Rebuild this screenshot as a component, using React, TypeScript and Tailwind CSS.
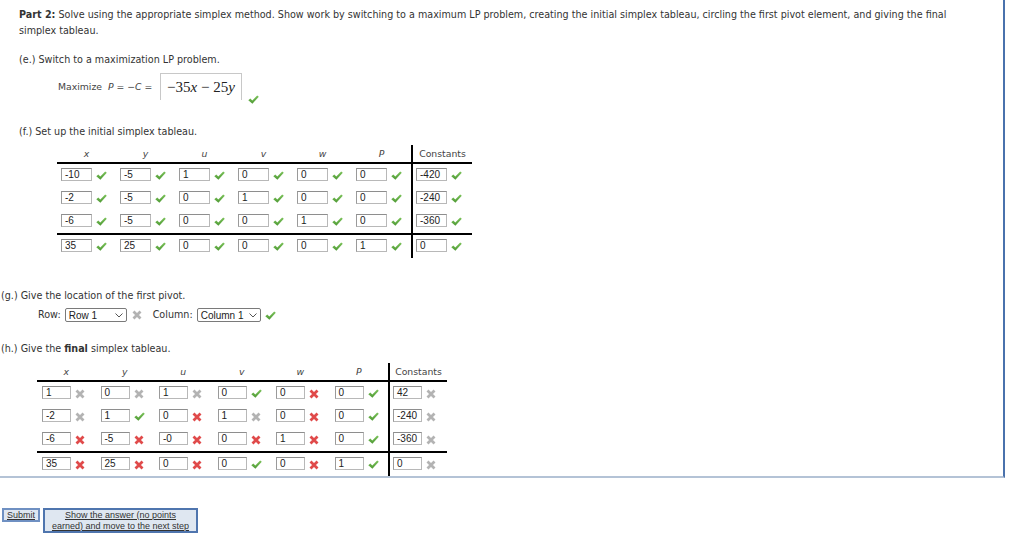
import React from "react"

type Mark = "ok" | "gray" | "red"

const Check = () => (
  <svg width="11" height="9" viewBox="0 0 11 9" className="shrink-0">
    <defs>
      <linearGradient id="gck" x1="0" y1="0" x2="0" y2="1">
        <stop offset="0" stopColor="#7cc35a" />
        <stop offset="1" stopColor="#4f9a35" />
      </linearGradient>
    </defs>
    <path d="M0.3 5.2 L2.3 3.6 L4.3 5.6 L9.2 0.4 L10.8 1.8 L4.4 8.8 Z" fill="url(#gck)" />
  </svg>
)

const Cross = ({ red }: { red?: boolean }) => (
  <svg width="10" height="10" viewBox="0 0 10 10" className="shrink-0">
    <path
      d="M1.5 1.5 L8.5 8.5 M8.5 1.5 L1.5 8.5"
      stroke={red ? "#e04a4a" : "#b3b3b3"}
      strokeWidth="2.8"
    />
  </svg>
)

const Icon = ({ m }: { m: Mark }) =>
  m === "ok" ? <Check /> : <Cross red={m === "red"} />

const Box = ({ v, w }: { v: string; w: string }) => (
  <div
    className={`${w} h-[13px] mb-[2px] border border-[#b8b8b8] border-t-[#8e8e8e] border-l-[#9a9a9a] bg-white pl-[3px] text-[10px] leading-[11px] text-[#222] font-['Liberation_Sans',Arial,sans-serif]`}
  >
    {v}
  </div>
)

const heads = ["x", "y", "u", "v", "w", "P"]

type TableProps = {
  rows: string[][]
  marks: Mark[][]
  wrap: string
  col: string
  pad: string
  box: string
}

function Tableau({ rows, marks, wrap, col, pad, box }: TableProps) {
  const Row = ({ r, i }: { r: string[]; i: number }) => (
    <div className="flex h-[23px]">
      {r.slice(0, 6).map((v, j) => (
        <div key={j} className={`${col} ${pad} flex items-center gap-[4px]`}>
          <Box v={v} w={box} />
          <Icon m={marks[i][j]} />
        </div>
      ))}
      <div className="flex-1 border-l-2 border-black pl-[3px] flex items-center gap-[4px]">
        <Box v={r[6]} w={box} />
        <Icon m={marks[i][6]} />
      </div>
    </div>
  )

  return (
    <div className={wrap}>
      <div className="flex h-[19px] border-b-2 border-black text-[9.3px] text-[#444]">
        {heads.map((h) => (
          <div key={h} className={`${col} flex items-center justify-center italic`}>
            {h}
          </div>
        ))}
        <div className="flex-1 border-l-2 border-black flex items-center justify-center">
          Constants
        </div>
      </div>
      {rows.slice(0, 3).map((r, i) => (
        <Row key={i} r={r} i={i} />
      ))}
      <div className="border-t-2 border-black">
        <Row r={rows[3]} i={3} />
      </div>
    </div>
  )
}

const initRows = [
  ["-10", "-5", "1", "0", "0", "0", "-420"],
  ["-2", "-5", "0", "1", "0", "0", "-240"],
  ["-6", "-5", "0", "0", "1", "0", "-360"],
  ["35", "25", "0", "0", "0", "1", "0"],
]
const initMarks: Mark[][] = initRows.map((r) => r.map(() => "ok"))

const finalRows = [
  ["1", "0", "1", "0", "0", "0", "42"],
  ["-2", "1", "0", "1", "0", "0", "-240"],
  ["-6", "-5", "-0", "0", "1", "0", "-360"],
  ["35", "25", "0", "0", "0", "1", "0"],
]
const finalMarks: Mark[][] = [
  ["gray", "gray", "gray", "ok", "red", "ok", "gray"],
  ["gray", "ok", "red", "gray", "red", "ok", "gray"],
  ["red", "red", "red", "red", "red", "ok", "gray"],
  ["red", "red", "red", "ok", "red", "ok", "gray"],
]

const Select = ({ label, w }: { label: string; w: string }) => (
  <div
    className={`${w} h-[14px] border border-[#7a7a7a] rounded-[2px] bg-white flex items-center justify-between pl-[3px] pr-[3px] text-[10px] text-[#222] font-['Liberation_Sans',Arial,sans-serif]`}
  >
    <span>{label}</span>
    <svg width="8" height="5" viewBox="0 0 8 5">
      <path d="M0.5 0.5 L4 4 L7.5 0.5" fill="none" stroke="#555" strokeWidth="1" />
    </svg>
  </div>
)

export default function App() {
  return (
    <div className="bg-white w-[1024px] h-[558px] font-['DejaVu_Sans',Verdana,sans-serif] text-[#333]">
      <div className="w-[1005px] h-[478px] border-r-2 border-r-[#4a72ad] border-b-2 border-b-[#b4c3d6]">
        <p className="pl-[19px] pt-[7px] text-[9.6px] leading-[16px]">
          <b>Part 2:</b> Solve using the appropriate simplex method. Show work by switching to a maximum LP
          problem, creating the initial simplex tableau, circling the first pivot element, and giving the final
          <br />
          simplex tableau.
        </p>

        <p className="pl-[19px] mt-[13px] text-[9.6px] leading-[16px]">(e.) Switch to a maximization LP problem.</p>

        <div className="ml-[58px] mt-[5px] flex items-center">
          <span className="text-[9.3px] text-[#444] w-[102px]">
            Maximize&nbsp; <i>P</i> = −<i>C</i> =
          </span>
          <div className="h-[27px] w-[82px] border border-b-0 border-[#c8c8c8] flex items-center justify-center text-[15px] text-[#222] font-['Liberation_Serif',serif]">
            −35<i>x</i>&nbsp;−&nbsp;25<i>y</i>
          </div>
          <div className="self-end ml-[6px] mb-[-4px]">
            <Check />
          </div>
        </div>

        <p className="pl-[19px] mt-[24px] text-[9.6px] leading-[16px]">(f.) Set up the initial simplex tableau.</p>

        <Tableau
          rows={initRows}
          marks={initMarks}
          wrap="ml-[57px] mt-[5px] w-[415px]"
          col="w-[59px]"
          pad="pl-[4px]"
          box="w-[31px]"
        />

        <p className="pl-[1px] mt-[30px] text-[9.6px] leading-[16px]">(g.) Give the location of the first pivot.</p>

        <div className="ml-[38px] mt-[3px] h-[16px] flex items-center text-[9.6px]">
          <span className="mr-[4px]">Row:</span>
          <Select label="Row 1" w="w-[62px]" />
          <span className="ml-[5px]">
            <Cross />
          </span>
          <span className="ml-[11px] mr-[4px]">Column:</span>
          <Select label="Column 1" w="w-[64px]" />
          <span className="ml-[4px]">
            <Check />
          </span>
        </div>

        <p className="pl-[1px] mt-[18px] text-[9.6px] leading-[16px]">
          (h.) Give the <b>final</b> simplex tableau.
        </p>

        <Tableau
          rows={finalRows}
          marks={finalMarks}
          wrap="ml-[37px] mt-[6px] w-[410px]"
          col="w-[58.5px]"
          pad="pl-[5px]"
          box="w-[29px]"
        />
      </div>

      <div className="mt-[30px] ml-[2px] flex items-start gap-[3px] font-['Liberation_Sans',Arial,sans-serif] text-[9px] text-[#333]">
        <button className="h-[14px] w-[38px] border-2 border-[#6f90c2] bg-[#dfe7f1] leading-[10px] underline">
          Submit
        </button>
        <button className="h-[25px] w-[155px] border-2 border-[#4f75ae] bg-[#dfe7f1] leading-[10.5px] underline">
          Show the answer (no points
          <br />
          earned) and move to the next step
        </button>
      </div>
    </div>
  )
}
